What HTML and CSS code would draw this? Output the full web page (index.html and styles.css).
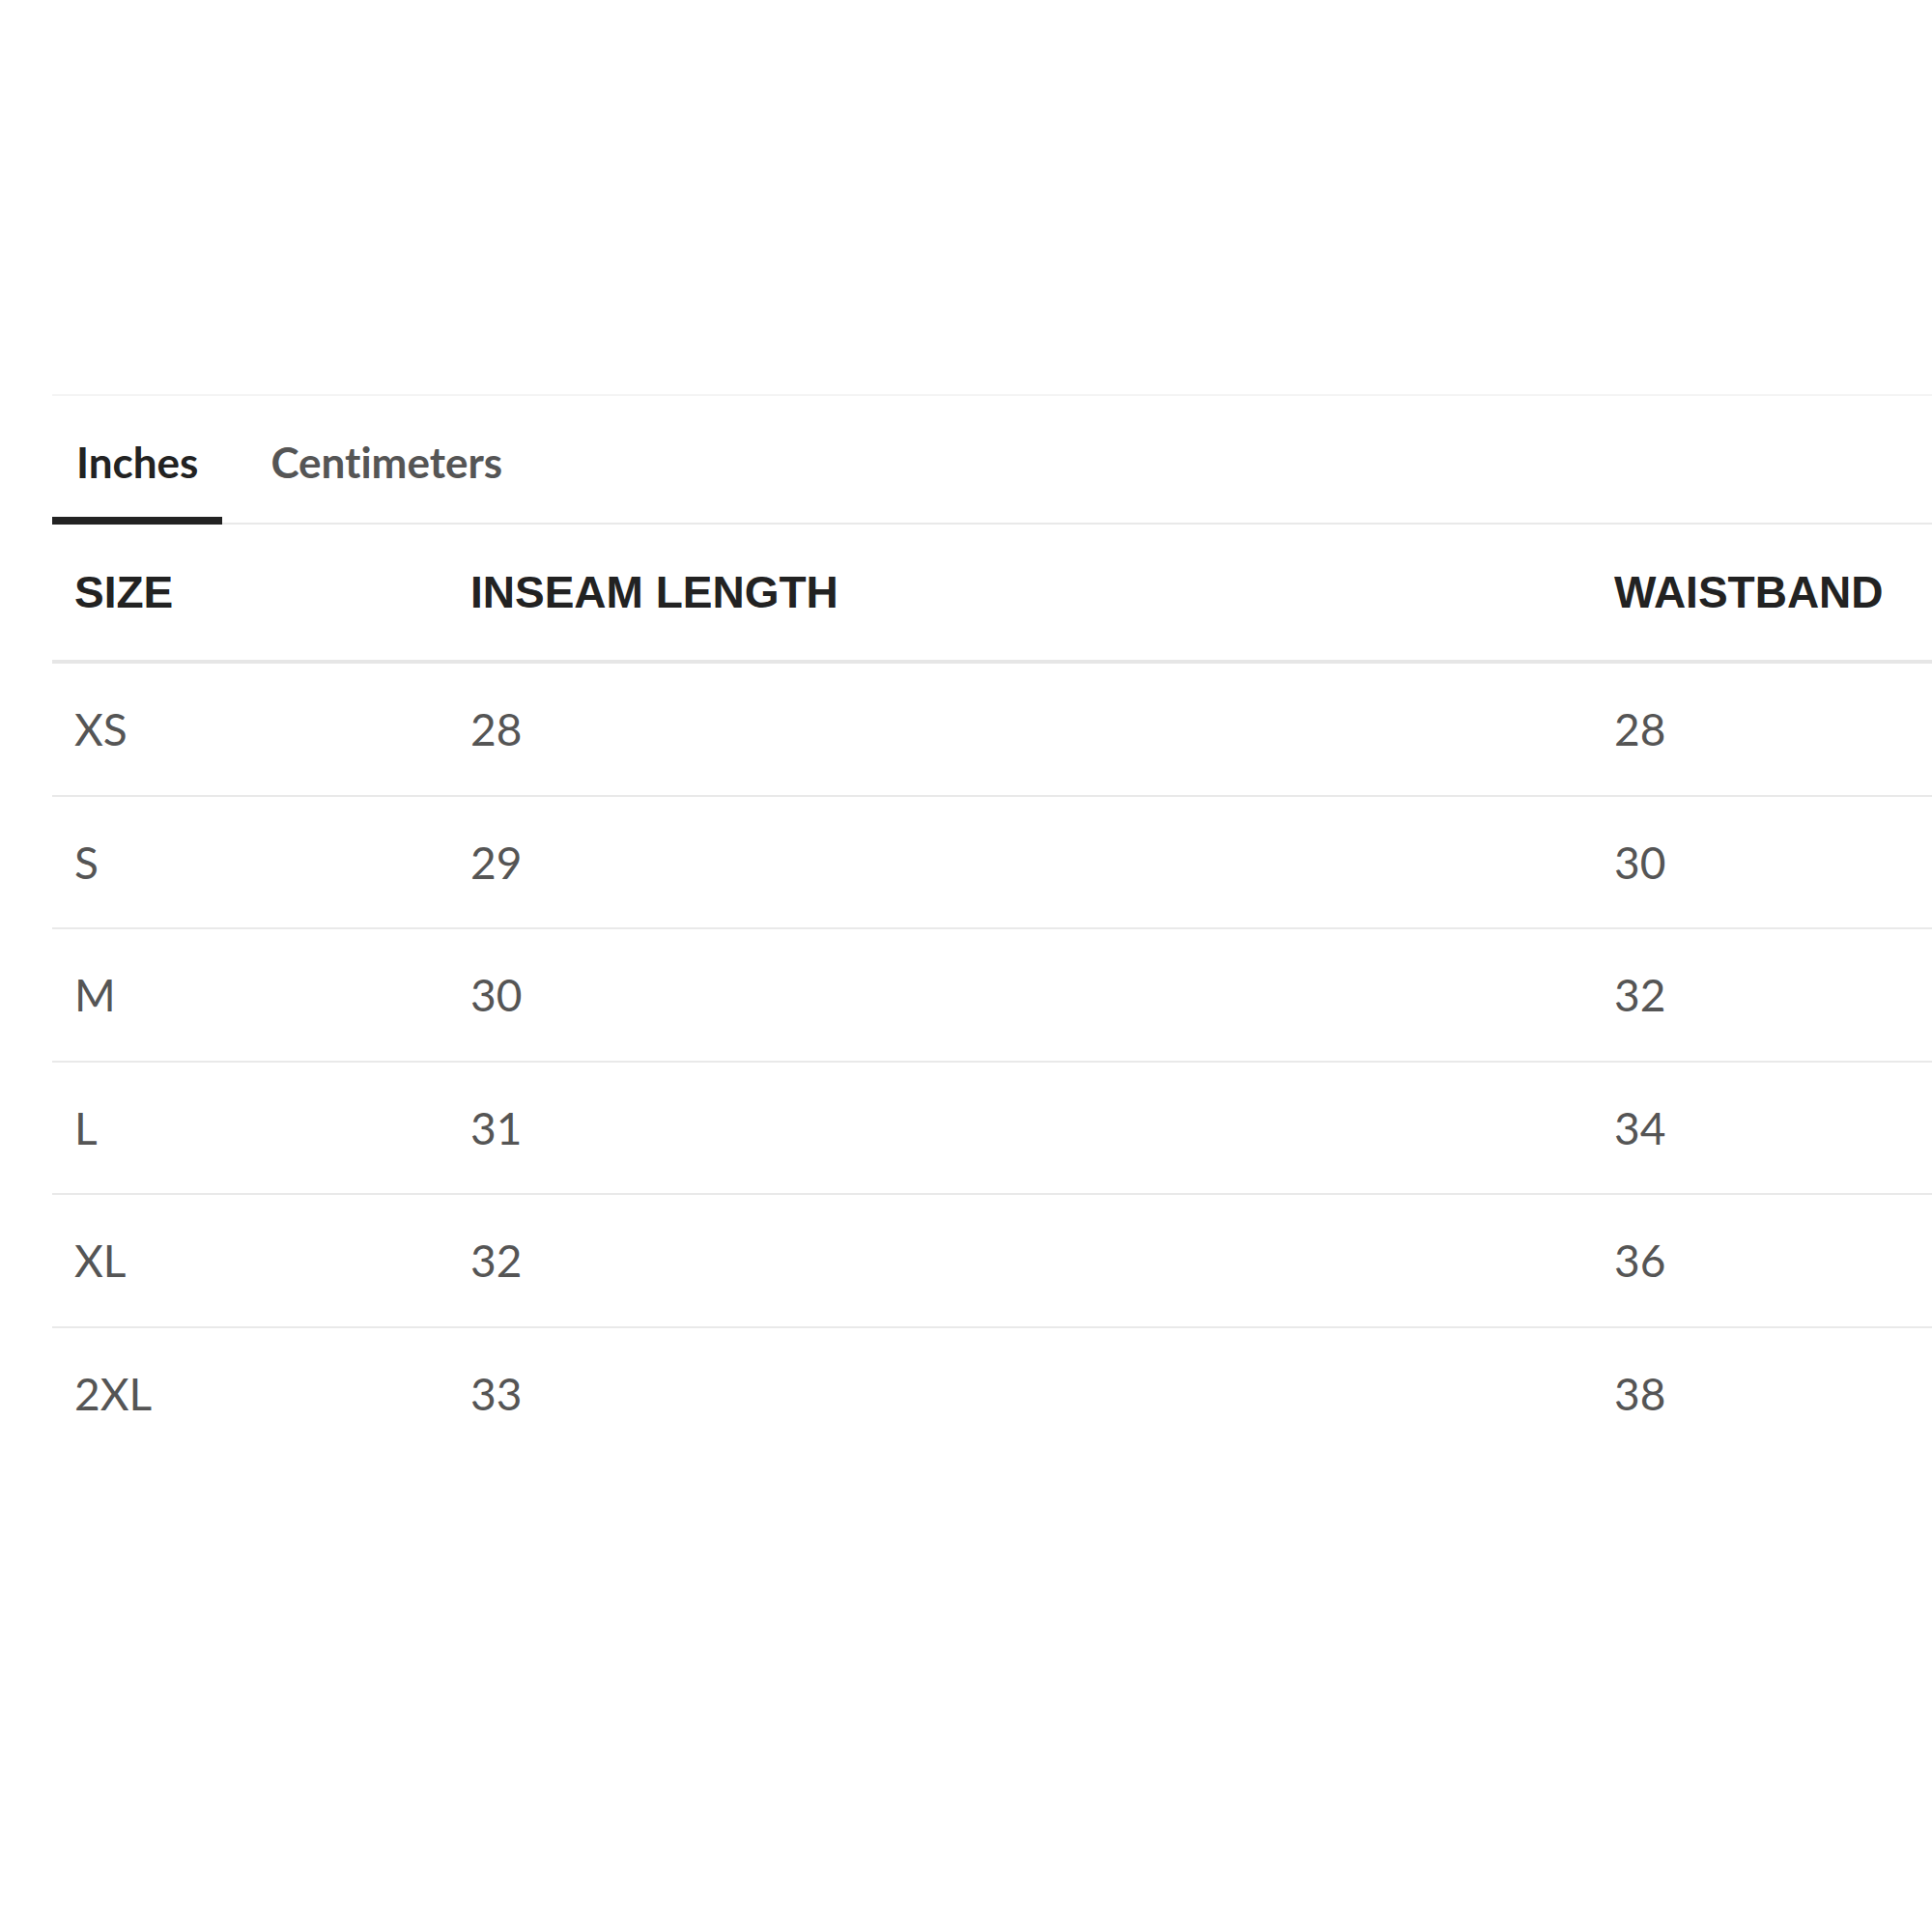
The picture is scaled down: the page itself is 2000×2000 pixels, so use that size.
FILE: index.html
```html
<!DOCTYPE html>
<html lang="en">
<head>
<meta charset="utf-8">
<title>Size chart</title>
<link rel="stylesheet" href="styles.css">
</head>
<body>
<section class="size-chart">
  <div class="tabs">
    <div class="tab tab-active">Inches</div>
    <div class="tab">Centimeters</div>
  </div>
  <table class="chart">
    <colgroup>
      <col class="col-size">
      <col class="col-inseam">
      <col class="col-waist">
    </colgroup>
    <thead>
      <tr><th>SIZE</th><th>INSEAM LENGTH</th><th>WAISTBAND</th></tr>
    </thead>
    <tbody>
      <tr><td>XS</td><td>28</td><td>28</td></tr>
      <tr><td>S</td><td>29</td><td>30</td></tr>
      <tr><td>M</td><td>30</td><td>32</td></tr>
      <tr><td>L</td><td>31</td><td>34</td></tr>
      <tr><td>XL</td><td>32</td><td>36</td></tr>
      <tr><td>2XL</td><td>33</td><td>38</td></tr>
    </tbody>
  </table>
</section>
</body>
</html>
```
FILE: styles.css
```css
html, body {
  margin: 0;
  padding: 0;
  background: #ffffff;
  overflow-x: hidden;
}

.size-chart {
  margin: 408px 0 0 54px;
  border-top: 2px solid #f4f4f4;
}

.tabs {
  display: flex;
  gap: 25px;
  border-bottom: 2px solid #e9e9e9;
}

.tab {
  font-family: "Lato", "Open Sans", sans-serif;
  font-weight: 700;
  font-size: 44px;
  line-height: 44px;
  color: #555555;
  font-variant-ligatures: none;
  padding: 46px 25px 35px;
  border-bottom: 8px solid transparent;
  margin-bottom: -2px;
}

.tab-active {
  color: #222222;
  border-bottom-color: #222222;
}

.chart {
  width: 100%;
  border-collapse: collapse;
  table-layout: fixed;
}

.col-size { width: 410px; }
.col-inseam { width: 1184px; }

.chart th {
  font-family: "Liberation Sans", Arial, sans-serif;
  font-weight: 700;
  font-size: 46px;
  line-height: 46px;
  color: #222222;
  text-align: left;
  padding: 47px 23px 47px;
  border-bottom: 4px solid #e6e6e6;
  white-space: nowrap;
}

.chart td {
  font-family: "Lato", "Open Sans", sans-serif;
  font-weight: 400;
  font-size: 46px;
  line-height: 46px;
  color: #555555;
  text-align: left;
  padding: 45px 23px 44.5px;
  border-bottom: 2px solid #e9e9e9;
}

.chart tbody tr:last-child td {
  border-bottom: none;
}
```
